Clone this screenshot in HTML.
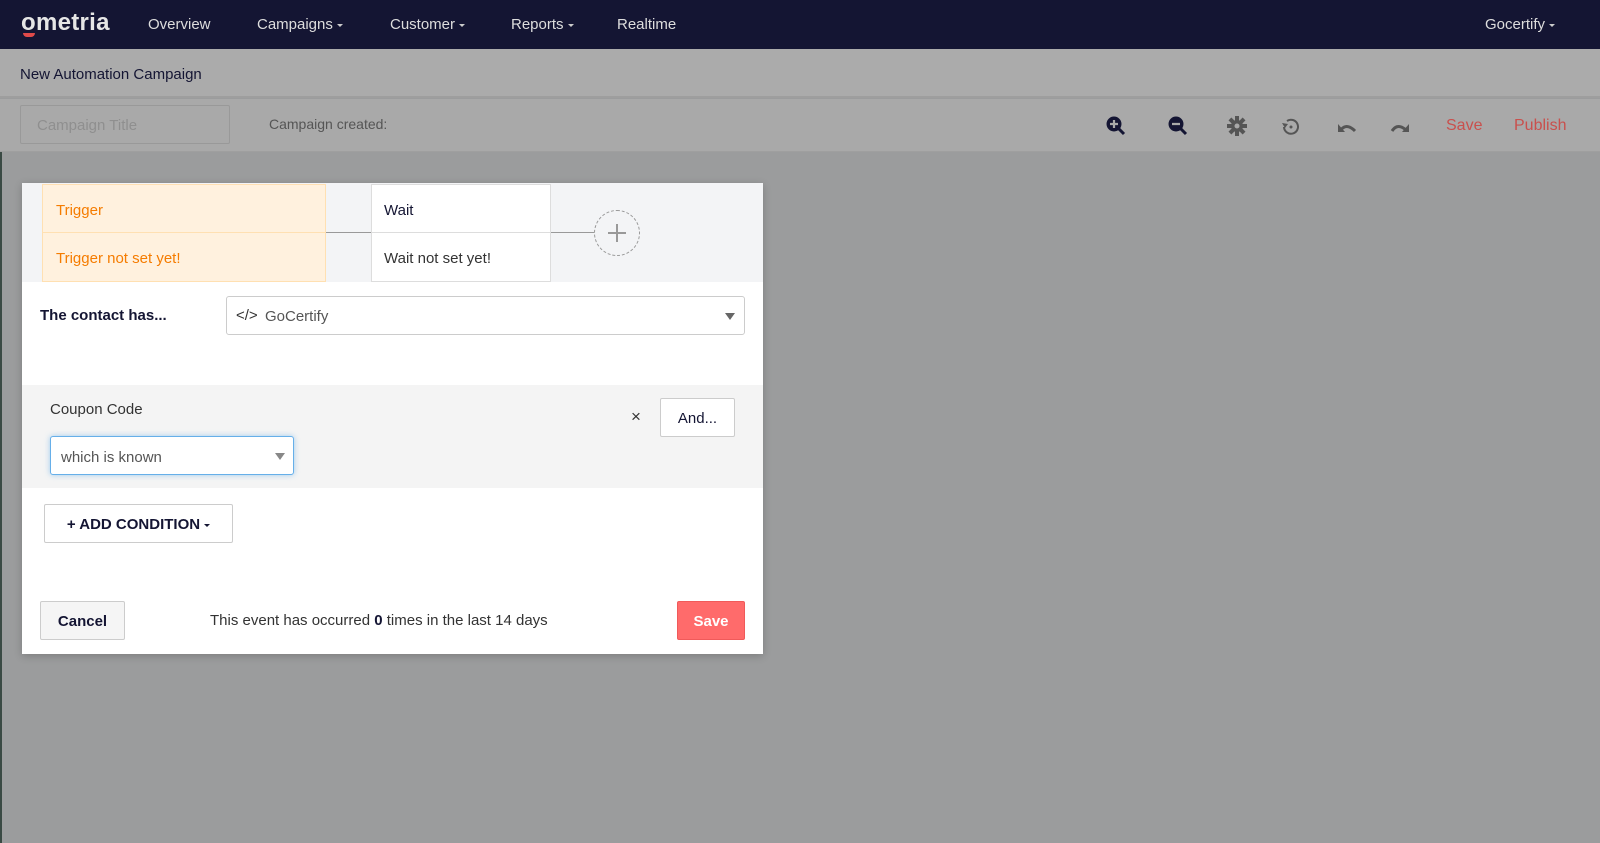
<!DOCTYPE html>
<html><head><meta charset="utf-8"><style>
*{box-sizing:border-box;margin:0;padding:0}
body{width:1600px;height:843px;overflow:hidden;background:#9b9c9d;font-family:"Liberation Sans",sans-serif;position:relative;color:#141533}
.abs{position:absolute}
.nav{left:0;top:0;width:1600px;height:49px;background:#141533;color:#ddd;font-size:15px}
.nav span{position:absolute;top:16px}
.car{display:inline-block;border-left:3px solid transparent;border-right:3px solid transparent;border-top:3px solid #ccc;vertical-align:middle;margin-left:4px}
.title{left:0;top:49px;width:1600px;height:49px;background:#ababab;border-bottom:2px solid #9e9e9e}
.tool{left:0;top:99px;width:1600px;height:53px;background:#a9a9a9;border-bottom:1px solid #9f9f9f}
.modal{left:22px;top:183px;width:741px;height:471px;background:#fff;box-shadow:0 2px 8px rgba(0,0,0,.2)}
.btn{position:absolute;border:1px solid #ccc;border-radius:2px;background:#fff;font-size:15px;text-align:center}
</style></head><body>
<div class="abs nav">
<span style="left:21px;top:9px;font-size:24px;font-weight:bold;color:#e6e6e6;letter-spacing:0.3px">ometria</span>
<div class="abs" style="left:23px;top:33px;width:12px;height:4px;border-radius:0 0 6px 6px;background:#e04a4a"></div>
<span style="left:148px">Overview</span>
<span style="left:257px">Campaigns<i class="car"></i></span>
<span style="left:390px">Customer<i class="car"></i></span>
<span style="left:511px">Reports<i class="car"></i></span>
<span style="left:617px">Realtime</span>
<span style="left:1485px">Gocertify<i class="car"></i></span>
</div>
<div class="abs title"><span class="abs" style="left:20px;top:17px;font-size:15px">New Automation Campaign</span></div>
<div class="abs tool">
<div class="abs" style="left:20px;top:6px;width:210px;height:39px;border:1px solid #999;border-radius:2px"></div>
<span class="abs" style="left:37px;top:18px;font-size:15px;color:#8f8f8f">Campaign Title</span>
<span class="abs" style="left:269px;top:17px;font-size:14px;color:#555">Campaign created:</span>
<svg class="abs" style="left:1100px;top:14px" width="320" height="28" viewBox="0 0 320 28">
<g fill="#141533" stroke="#141533" stroke-width="3"><circle cx="14" cy="11" r="6"/><path d="M18 15l6 6"/><circle cx="76" cy="11" r="6"/><path d="M80 15l6 6"/></g>
<path d="M10 11h8M14 7v8M72 11h8" stroke="#a9a9a9" stroke-width="2.2"/>
<g fill="#555" transform="translate(137,13)"><circle r="6"/><rect x="-2" y="-10" width="4" height="20"/><rect x="-10" y="-2" width="20" height="4"/><rect x="-2" y="-10" width="4" height="20" transform="rotate(45)"/><rect x="-2" y="-10" width="4" height="20" transform="rotate(-45)"/></g>
<circle cx="137" cy="13" r="2.5" fill="#a9a9a9"/>
<path d="M184 14a7 7 0 1 0 3-6" fill="none" stroke="#555" stroke-width="2"/><path d="M182 10l3 5 3-4z" fill="#555"/><circle cx="191" cy="14" r="1.5" fill="#555"/>
<path d="M240 18q6-9 15 0" fill="none" stroke="#555" stroke-width="3"/><path d="M238 11v8h7z" fill="#555"/>
<path d="M292 18q6-9 15 0" fill="none" stroke="#555" stroke-width="3"/><path d="M309 11v8h-7z" fill="#555"/>
</svg>
<span class="abs" style="left:1446px;top:18px;font-size:16px;color:#c9504d">Save</span>
<span class="abs" style="left:1514px;top:18px;font-size:16px;color:#c9504d">Publish</span>
</div>
<div class="abs" style="left:0;top:152px;width:2px;height:691px;background:#3a4a44"></div>
<div class="abs modal">
<div class="abs" style="left:0;top:0;width:741px;height:99px;background:#f3f4f6"></div>
<div class="abs" style="left:297px;top:49px;width:275px;height:1px;background:#999"></div>
<div class="abs" style="left:20px;top:1px;width:284px;height:98px;background:#fff1de;border:1px solid #ffe0b2"></div>
<div class="abs" style="left:20px;top:49px;width:284px;height:1px;background:#ffe0b2"></div>
<span class="abs" style="left:34px;top:19px;font-size:15px;color:#f57c00">Trigger</span>
<span class="abs" style="left:34px;top:67px;font-size:15px;color:#f57c00">Trigger not set yet!</span>
<div class="abs" style="left:349px;top:1px;width:180px;height:98px;background:#fff;border:1px solid #ddd"></div>
<div class="abs" style="left:349px;top:49px;width:180px;height:1px;background:#ddd"></div>
<span class="abs" style="left:362px;top:19px;font-size:15px">Wait</span>
<span class="abs" style="left:362px;top:67px;font-size:15px;color:#333">Wait not set yet!</span>
<div class="abs" style="left:572px;top:27px;width:46px;height:46px;border-radius:50%;border:1.5px dashed #999;background:#f3f4f6"></div>
<div class="abs" style="left:586px;top:49px;width:18px;height:2px;background:#999"></div>
<div class="abs" style="left:594px;top:41px;width:2px;height:18px;background:#999"></div>
<span class="abs" style="left:18px;top:124px;font-size:15px;font-weight:bold">The contact has...</span>
<div class="abs" style="left:204px;top:113px;width:519px;height:39px;border:1px solid #ccc;border-radius:3px"></div>
<span class="abs" style="left:214px;top:124px;font-size:15px;color:#333">&lt;/&gt;</span>
<span class="abs" style="left:243px;top:125px;font-size:15px;color:#555">GoCertify</span>
<div class="abs" style="left:703px;top:130px;border-left:5px solid transparent;border-right:5px solid transparent;border-top:7px solid #666"></div>
<div class="abs" style="left:0;top:202px;width:741px;height:103px;background:#f4f4f4"></div>
<span class="abs" style="left:28px;top:218px;font-size:15px;color:#333">Coupon Code</span>
<div class="abs" style="left:28px;top:253px;width:244px;height:39px;border:1px solid #66afe9;border-radius:3px;background:#fff;box-shadow:0 0 6px rgba(102,175,233,.6)"></div>
<span class="abs" style="left:39px;top:266px;font-size:15px;color:#555">which is known</span>
<div class="abs" style="left:253px;top:270px;border-left:5px solid transparent;border-right:5px solid transparent;border-top:7px solid #888"></div>
<span class="abs" style="left:609px;top:224px;font-size:17px;color:#333">×</span>
<div class="btn" style="left:638px;top:215px;width:75px;height:39px;line-height:39px">And...</div>
<div class="btn" style="left:22px;top:321px;width:189px;height:39px;line-height:39px;font-weight:bold">+ ADD CONDITION<i class="car" style="border-top-color:#141533"></i></div>
<div class="btn" style="left:18px;top:418px;width:85px;height:39px;line-height:39px;background:#f5f5f5;font-weight:bold">Cancel</div>
<span class="abs" style="left:188px;top:429px;font-size:15px;color:#333">This event has occurred <b style="color:#141533">0</b> times in the last 14 days</span>
<div class="btn" style="left:655px;top:418px;width:68px;height:39px;line-height:39px;background:#ff6b6b;border-color:#f05a5a;color:#fff;font-weight:bold">Save</div>
</div>
</body></html>
